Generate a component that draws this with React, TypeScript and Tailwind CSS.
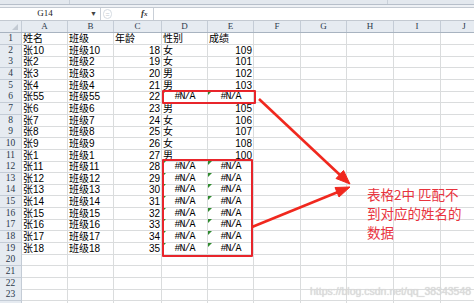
import clsx from "clsx";

const COLS = ["A", "B", "C", "D", "E", "F", "G", "H", "I", "J"];
const GRID =
  "grid grid-cols-[22px_46px_46px_48px_46px_46px_47px_46px_47px_47px_47px]";

const NA = "#N/A";
const DATA: string[][] = [
  ["姓名", "班级", "年龄", "性别", "成绩"],
  ["张10", "班级10", "18", "女", "109"],
  ["张2", "班级2", "19", "女", "101"],
  ["张3", "班级3", "20", "男", "102"],
  ["张4", "班级4", "21", "男", "103"],
  ["张55", "班级55", "22", NA, NA],
  ["张6", "班级6", "23", "男", "105"],
  ["张7", "班级7", "24", "女", "106"],
  ["张8", "班级8", "25", "女", "107"],
  ["张9", "班级9", "26", "女", "108"],
  ["张1", "班级1", "27", "男", "100"],
  ["张11", "班级11", "28", NA, NA],
  ["张12", "班级12", "29", NA, NA],
  ["张13", "班级13", "30", NA, NA],
  ["张14", "班级14", "31", NA, NA],
  ["张15", "班级15", "32", NA, NA],
  ["张16", "班级16", "33", NA, NA],
  ["张17", "班级17", "34", NA, NA],
  ["张18", "班级18", "35", NA, NA],
];

// rows are ~11.65px tall, so alternate 12/11
const rowTall = (r: number) =>
  Math.round(33 + r * 11.65) - Math.round(33 + (r - 1) * 11.65) === 12;

function Cell({ v }: { v: string }) {
  const isNum = /^\d+$/.test(v);
  const isNA = v === NA;
  return (
    <div
      className={clsx(
        "relative flex items-center overflow-hidden whitespace-nowrap border-r border-b border-[#dadcdd] leading-[11px]",
        isNum && "justify-end pr-[1px]",
        isNA && "justify-center",
        !isNum && !isNA && "justify-start pl-[1px]"
      )}
    >
      {isNA && (
        <span className="absolute left-0 top-0 h-0 w-0 border-t-[4px] border-r-[4px] border-t-[#2f8a2f] border-r-transparent" />
      )}
      <span
        className={clsx(
          isNA &&
            "font-['Liberation_Mono',monospace] text-[10px] tracking-[-1px]"
        )}
      >
        {v}
      </span>
    </div>
  );
}

export default function App() {
  // 23 numbered rows fit; the 24th is only a 2px sliver at the bottom
  const rows = Array.from({ length: 24 }, (_, i) => i + 1);
  return (
    <div className="relative h-[303px] w-[474px] overflow-hidden bg-white font-['Liberation_Sans','Noto_Sans_CJK_SC',sans-serif] text-[10px] text-black">
      {/* ribbon remnant */}
      <div className="flex h-[5px] border-b border-[#b7bfca] bg-[#e3e8ee]">
        <div className="w-[70px] border-r border-[#c9d0d9]" />
        <div className="w-[318px] border-r border-[#c9d0d9]" />
      </div>
      <div className="h-[2px] bg-[#eef1f5]" />

      {/* formula bar */}
      <div className="flex h-[14px] border-y border-[#c3c9d1] bg-white">
        <div className="flex w-[101px] items-center border-r border-[#c9cfd7]">
          <span className="w-[90px] text-center font-['Liberation_Serif',serif] text-[9px] text-[#222]">
            G14
          </span>
          <span className="text-[7px] text-[#444]">▼</span>
        </div>
        <div className="flex w-[53px] items-center border-r border-[#c9cfd7]">
          <span className="ml-[2px] flex h-[10px] w-[9px] items-center justify-center rounded-full border border-[#d5dbe2] text-[7px] leading-none text-[#c2c8cf]">
            =
          </span>
          <span className="ml-[29px] font-['Liberation_Serif',serif] text-[9px] font-bold italic text-[#333]">
            f<span className="text-[7px]">x</span>
          </span>
        </div>
        <div className="flex-1" />
      </div>

      {/* column headers */}
      <div
        className={clsx(
          GRID,
          "h-[12px] border-b border-[#a8b3c0] bg-[#e6ebf1] font-['Liberation_Serif',serif] text-[9px] leading-[11px] text-[#2c3a4c]"
        )}
      >
        <div className="relative border-r border-[#c4ccd6]">
          <span className="absolute bottom-[2px] right-[3px] h-0 w-0 border-b-[6px] border-l-[6px] border-b-[#c2c9d2] border-l-transparent" />
        </div>
        {COLS.map((c) => (
          <div
            key={c}
            className="flex items-center justify-center border-r border-[#c4ccd6]"
          >
            {c}
          </div>
        ))}
      </div>

      {/* rows */}
      {rows.map((r) => {
        const cells = DATA[r - 1] ?? [];
        return (
          <div
            key={r}
            className={clsx(GRID, rowTall(r) ? "h-[12px]" : "h-[11px]")}
          >
            <div className="flex items-center justify-center border-r border-b border-[#c4ccd6] bg-[#e6ebf1] font-['Liberation_Serif',serif] text-[9.5px] leading-[11px] text-[#2c3a4c]">
              {r < 24 ? r : ""}
            </div>
            {COLS.map((c, i) => (
              <Cell key={c} v={cells[i] ?? ""} />
            ))}
          </div>
        );
      })}

      {/* red highlight boxes */}
      <div className="absolute left-[162px] top-[90px] h-[14px] w-[94px] rounded-[1px] border-2 border-[#e8252b]" />
      <div className="absolute left-[162px] top-[159px] h-[98px] w-[91px] rounded-[1px] border-2 border-[#e8252b]" />

      {/* arrows */}
      <svg
        className="pointer-events-none absolute inset-0"
        width="474"
        height="303"
        viewBox="0 0 474 303"
      >
        <g fill="#f0281e" stroke="#f0281e">
          <line x1="259" y1="99" x2="340" y2="175" strokeWidth="2.6" />
          <polygon points="350,184 336,178.5 343.5,170.5" strokeWidth="1" />
          <line x1="252" y1="227" x2="338" y2="192" strokeWidth="2.6" />
          <polygon points="350,187 339,197 335,187.5" strokeWidth="1" />
        </g>
      </svg>

      {/* note */}
      <div className="absolute left-[367px] top-[185px] font-['Noto_Sans_CJK_SC',sans-serif] text-[13.5px] leading-[19px] text-[#e8333d]">
        <div>表格2中 匹配不</div>
        <div>到对应的姓名的</div>
        <div>数据</div>
      </div>

      {/* watermark */}
      <div className="absolute left-[310px] top-[284px] text-[10.5px] text-[#dcdcdc] [text-shadow:0_0_1px_#c8c8c8]">
        https://blog.csdn.net/qq_38343548
      </div>
    </div>
  );
}
